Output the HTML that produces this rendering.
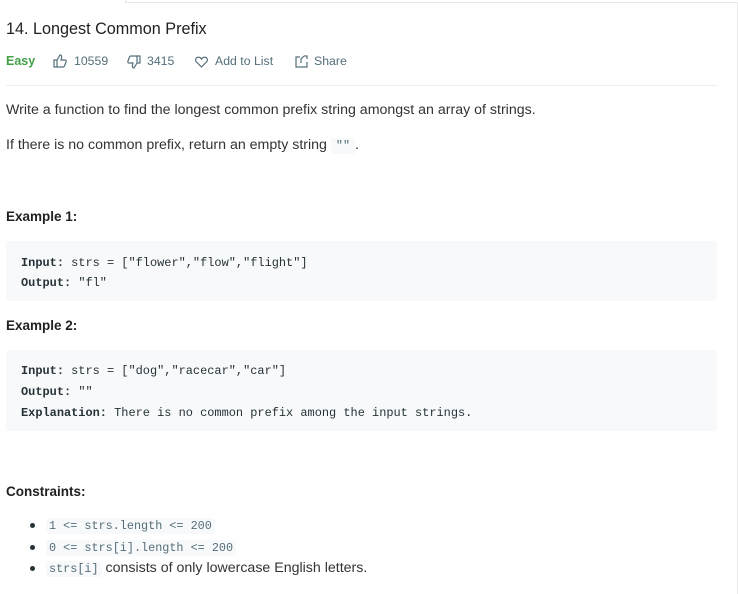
<!DOCTYPE html>
<html><head><meta charset="utf-8"><style>
*{margin:0;padding:0;box-sizing:border-box}
body{width:738px;height:594px;background:#fff;position:relative;overflow:hidden;font-family:"Liberation Sans",sans-serif;color:#263238}
.a{position:absolute;white-space:nowrap}
.t{font-size:14.2px;color:#333}
.h{font-size:13.5px;font-weight:bold;color:#212121}
.mono{font-family:"Liberation Mono",monospace;font-size:11.95px;color:#263238}
.pre{position:absolute;left:6px;width:711px;background:#f7f9fa;border-radius:3px}
.ic{font-size:12.3px;color:#546e7a}
.code{background:#f7f9fa;color:#546e7a;border-radius:3px;padding:1px 3px;font-family:"Liberation Mono",monospace;font-size:11.8px}
svg{position:absolute}
</style></head><body>
<div class="a" style="left:125px;top:2px;width:613px;height:1px;background:#e8e8e8"></div>
<div class="a" style="left:125px;top:0;width:1px;height:3px;background:#e8e8e8"></div>
<div class="a" style="left:737px;top:2px;width:1px;height:592px;background:#e8e8e8"></div>

<div class="a" style="left:6px;top:20px;font-size:16.2px;color:#212121">14. Longest Common Prefix</div>

<div class="a" style="left:6px;top:54px;font-size:12.5px;color:#43a047;font-weight:bold">Easy</div>
<svg style="left:53px;top:54px" width="14" height="14" viewBox="0 0 14 14" fill="none" stroke="#546e7a" stroke-width="1.2"><path d="M1 6h3v7H1zM4 6l3-5c1 0 2 1 1.5 3L8 6h4c1 0 1.5 1 1 2l-1.5 4c-.3.7-.8 1-1.5 1H4"/></svg>
<div class="a ic" style="left:74px;top:54px">10559</div>
<svg style="left:127px;top:55px" width="14" height="14" viewBox="0 0 14 14" fill="none" stroke="#546e7a" stroke-width="1.2"><path d="M13 8h-3V1h3zM10 8l-3 5c-1 0-2-1-1.5-3L6 8H2C1 8 .5 7 1 6l1.5-4C2.8 1.3 3.3 1 4 1h6"/></svg>
<div class="a ic" style="left:147px;top:54px">3415</div>
<svg style="left:195px;top:56px" width="13" height="12" viewBox="0 0 13 12" fill="none" stroke="#546e7a" stroke-width="1.2"><path d="M6.5 11L1.5 6C0 4.5.5 1.5 3 1.2c1.5-.2 2.7.6 3.5 1.8C7.3 1.8 8.5 1 10 1.2c2.5.3 3 3.3 1.5 4.8z"/></svg>
<div class="a ic" style="left:215px;top:54px">Add to List</div>
<svg style="left:295px;top:55px" width="13" height="13" viewBox="0 0 13 13" fill="none" stroke="#546e7a" stroke-width="1.2"><path d="M5 2H1v10h11V7M6 8V4l3-3M9 1h3v3"/></svg>
<div class="a ic" style="left:314px;top:54px">Share</div>

<div class="a" style="left:6px;top:85px;width:711px;height:1px;background:#eee"></div>

<div class="a t" style="left:6px;top:102px">Write a function to find the longest common prefix string amongst an array of strings.</div>
<div class="a t" style="left:6px;top:137px">If there is no common prefix, return an empty string <span class="code" style="padding:1px 5px">""</span>.</div>

<div class="a h" style="left:6px;top:209px">Example 1:</div>
<div class="pre" style="top:241px;height:60px"></div>
<div class="a mono" style="left:21px;top:253px;line-height:20px"><b>Input:</b> strs = ["flower","flow","flight"]<br><b>Output:</b> "fl"</div>

<div class="a h" style="left:6px;top:318px">Example 2:</div>
<div class="pre" style="top:350px;height:81px"></div>
<div class="a mono" style="left:21px;top:361px;line-height:21px"><b>Input:</b> strs = ["dog","racecar","car"]<br><b>Output:</b> ""<br><b>Explanation:</b> There is no common prefix among the input strings.</div>

<div class="a h" style="left:6px;top:484px">Constraints:</div>
<div class="a" style="left:30px;top:523px;width:5px;height:5px;border-radius:50%;background:#263238"></div>
<div class="a" style="left:30px;top:545px;width:5px;height:5px;border-radius:50%;background:#263238"></div>
<div class="a" style="left:30px;top:566px;width:5px;height:5px;border-radius:50%;background:#263238"></div>
<div class="a t" style="left:46px;top:517px"><span class="code">1 &lt;= strs.length &lt;= 200</span></div>
<div class="a t" style="left:46px;top:539px"><span class="code">0 &lt;= strs[i].length &lt;= 200</span></div>
<div class="a t" style="left:46px;top:560px"><span class="code">strs[i]</span> consists of only lowercase English letters.</div>
</body></html>
